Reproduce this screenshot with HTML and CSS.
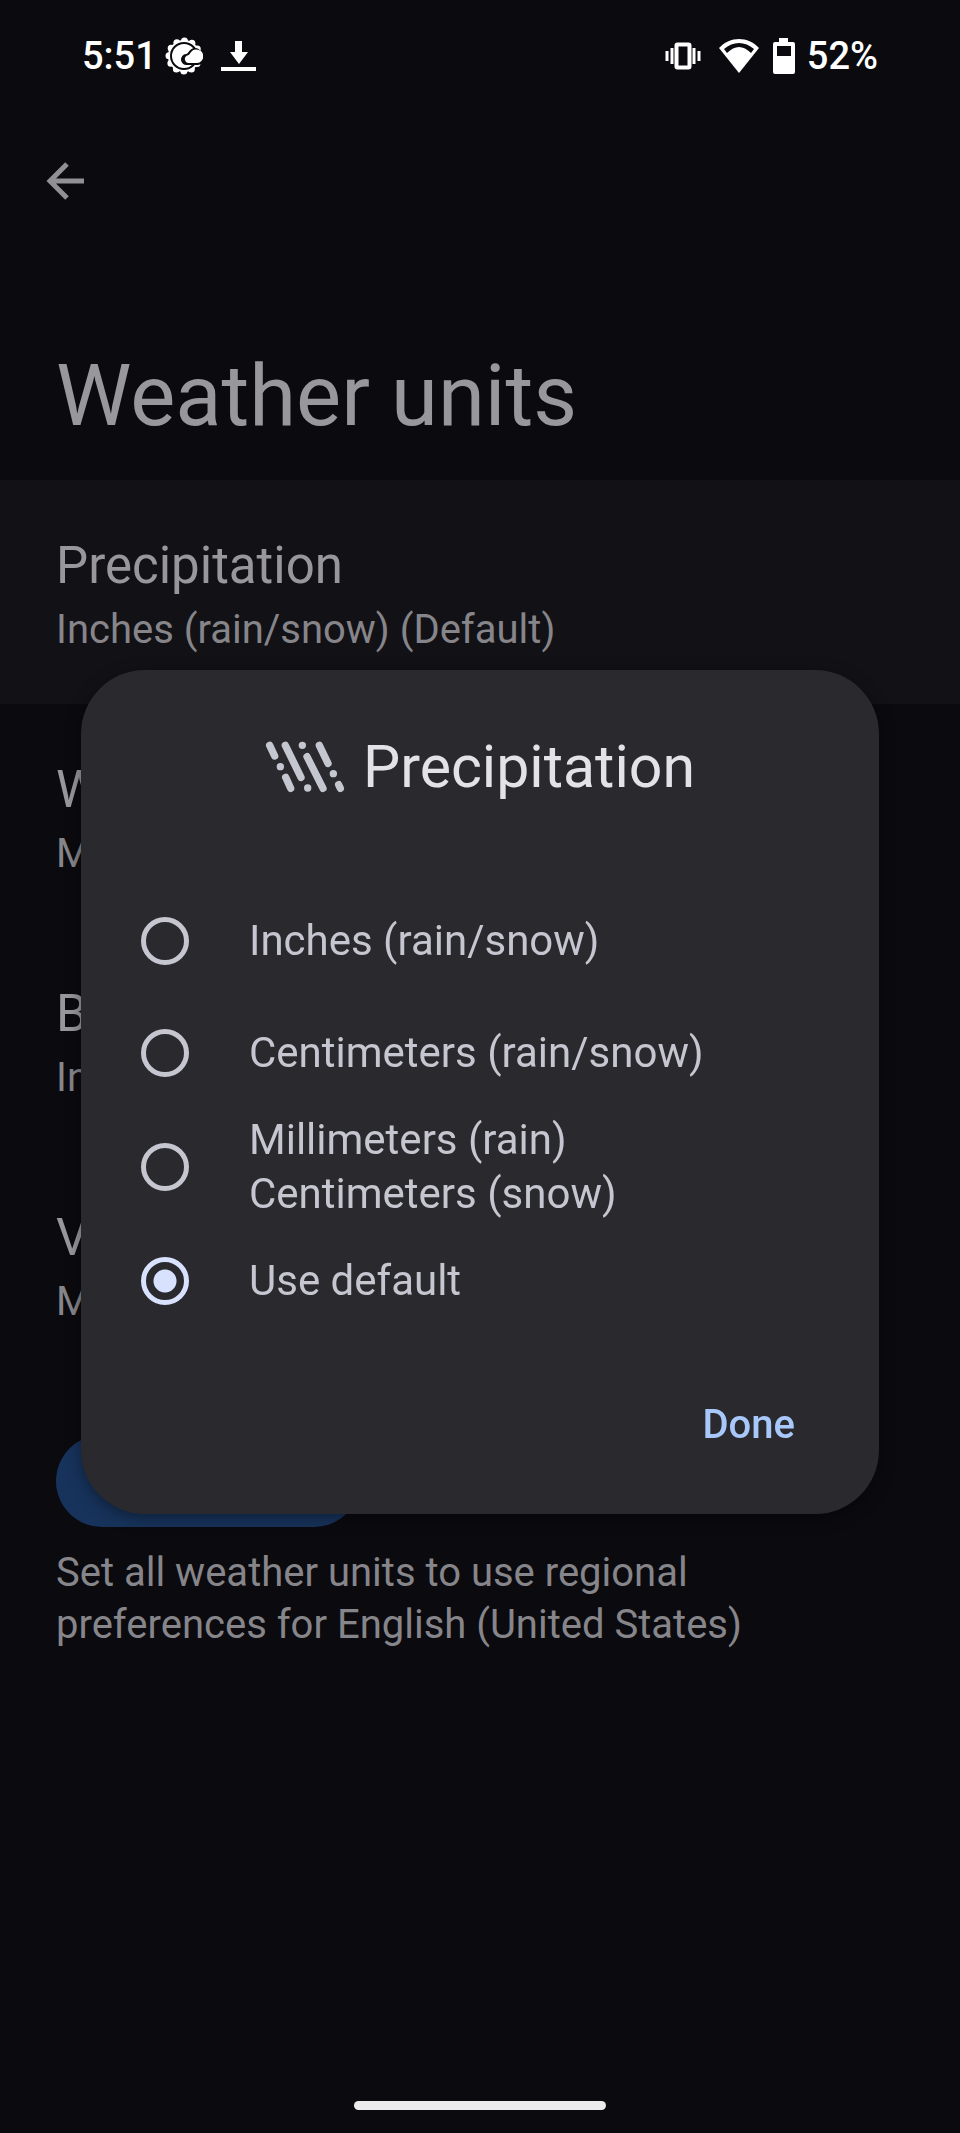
FILE: index.html
```html
<!DOCTYPE html>
<html lang="en">
<head>
  <meta charset="UTF-8">
  <meta name="viewport" content="width=device-width, initial-scale=1.0">
  <title>Weather units</title>
  <link rel="stylesheet" href="styles.css">
</head>
<body>
  <div class="status-bar">
    <span class="clock">5:51</span>
    <svg class="icon-weather" width="38" height="38" viewBox="0 0 38 38">
      <circle cx="19" cy="19" r="16" fill="#fff"/>
      <circle cx="19" cy="19" r="15" fill="none" stroke="#fff" stroke-width="7" stroke-linecap="round" stroke-dasharray="0 7.854"/>
      <circle cx="19" cy="19" r="13" fill="#fff" stroke="#0b0a0f" stroke-width="2"/>
      <path d="M25 28h-3a5.500 5.500 0 0 1-1-11c3 0 3-6 9-6a7 7 0 0 1 6 4l2 0v8a6 6 0 0 1-5 5z" fill="#0b0a0f"/>
      <path d="M32 26H23a4 4 0 0 1-1-7.500c4 0 3-6 9-6a6.500 6.500 0 0 1 1 13.500z" fill="#fff"/>
    </svg>
    <svg class="icon-download" width="36" height="30" viewBox="0 0 36 30" fill="#fff">
      <path d="M14 0h7v11h6l-9 12-9-12h5zM0 26h35v4H0z"/>
    </svg>
    <div class="status-right">
      <svg width="36" height="28" viewBox="0 0 36 28" fill="none" stroke="#fff" stroke-width="3">
        <rect x="11.500" y="2.500" width="13" height="23" rx="1" stroke-width="4"/>
        <path d="M2 9v10M7 6v16M29 6v16M34 9v10"/>
      </svg>
      <svg class="icon-wifi" width="40" height="34" viewBox="0 0 40 34">
        <path d="M0 9C11-3 29-3 40 9L20 34z" fill="#fff"/>
        <path d="M5 10C14 2 26 2 35 10l-3 4C24 6 16 6 8 14z" fill="#0b0a0f"/>
      </svg>
      <svg class="icon-battery" width="22" height="36" viewBox="0 0 22 36">
        <path d="M6 0h9v4h5q2 0 2 2v28q0 2-2 2H2q-2 0-2-2V6q0-2 2-2h4z" fill="#fff"/>
        <path d="M4 8h14v10H4z" fill="#0b0a0f"/>
      </svg>
      <span class="battery-level">52%</span>
    </div>
  </div>

  <main class="page">
    <button class="back" aria-label="Back">
      <svg width="38" height="38" viewBox="0 0 38 38" fill="none" stroke="#919095" stroke-width="5">
        <path d="M38 19H4M21 2L4 19l17 17"/>
      </svg>
    </button>
    <h1>Weather units</h1>

    <ul class="settings">
      <li class="setting selected">
        <h2>Precipitation</h2>
        <p>Inches (rain/snow) (Default)</p>
      </li>
      <li class="setting">
        <h2>Wind</h2>
        <p>Mph</p>
      </li>
      <li class="setting">
        <h2>Baro</h2>
        <p>Inches</p>
      </li>
      <li class="setting">
        <h2>Visibility</h2>
        <p>Miles</p>
      </li>
    </ul>

    <div class="reset">
      <button class="reset-btn">Use defaults</button>
      <p>Set all weather units to use regional preferences for English (United States)</p>
    </div>
  </main>

  <div class="overlay">
    <form class="dialog" role="dialog" aria-labelledby="dialogTitle">
      <div class="dialog-header">
        <svg width="80" height="52" viewBox="72 96 240 156" fill="none" stroke="#c4c7d0" stroke-width="22" stroke-linecap="round">
          <path d="M86 109l15 32M118 173h.1M134 205l15 33M133 109l47 96M200 237h.1M184 109h.1M198 143l48 95M235 109l26 54M277 194h.1M293 227l5 11"/>
        </svg>
        <h2 id="dialogTitle">Precipitation</h2>
      </div>

      <label class="option">
        <input type="radio" name="unit" value="in">
        <span>Inches (rain/snow)</span>
      </label>
      <label class="option">
        <input type="radio" name="unit" value="cm">
        <span>Centimeters (rain/snow)</span>
      </label>
      <label class="option">
        <input type="radio" name="unit" value="mm">
        <span>Millimeters (rain)<br>Centimeters (snow)</span>
      </label>
      <label class="option">
        <input type="radio" name="unit" value="default" checked>
        <span>Use default</span>
      </label>

      <div class="dialog-actions">
        <button type="button" class="done">Done</button>
      </div>
    </form>
  </div>

  <div class="home-bar"></div>
</body>
</html>
```
FILE: styles.css
```css
* {
  box-sizing: border-box;
  margin: 0;
  padding: 0;
  font-family: Roboto, sans-serif;
}

body {
  display: flex;
  flex-direction: column;
  min-height: 100vh;
  background: #0b0a0f;
  color: #98979c;
}

button {
  border: none;
  background: none;
  cursor: pointer;
}

svg {
  display: block;
  flex-shrink: 0;
}

/* status bar */
.status-bar {
  display: flex;
  align-items: center;
  height: 112px;
  padding: 0 82px;
  color: #fff;
  font-size: 38px;
  font-weight: 500;
}

.icon-weather {
  margin-left: 8px;
}

.icon-download {
  margin-left: 18px;
}

.status-right {
  display: flex;
  align-items: center;
  margin-left: auto;
}

.icon-wifi {
  margin-left: 18px;
}

.icon-battery {
  margin: 0 12px 0 14px;
}

/* settings page */
.page {
  flex: 1;
}

.back {
  display: block;
  margin: 40px 36px 0;
  padding: 10px;
}

h1 {
  padding: 132px 56px 30px;
  font-size: 85px;
  font-weight: 400;
  line-height: 108px;
}

.settings {
  list-style: none;
}

.setting {
  padding: 54px 56px 48px;
}

.setting.selected {
  background: #121116;
}

.setting h2 {
  margin-bottom: 6px;
  font-size: 51px;
  font-weight: 400;
  line-height: 64px;
}

.setting p,
.reset p {
  font-size: 40px;
  line-height: 52px;
  color: #86858a;
}

.reset {
  padding: 59px 56px;
}

.reset p {
  max-width: 740px;
}

.reset-btn {
  height: 92px;
  margin-bottom: 20px;
  padding: 0 46px;
  border-radius: 46px;
  background: #17335c;
  color: #86858a;
  font-size: 38px;
}

/* dialog */
.overlay {
  position: fixed;
  inset: 0;
  display: flex;
  align-items: center;
  padding: 50px 81px 0;
}

.dialog {
  width: 100%;
  padding: 63px 48px 43px;
  border-radius: 64px;
  background: #2a292e;
  box-shadow: 0 4px 16px rgba(0, 0, 0, 0.4);
}

.dialog-header {
  display: flex;
  justify-content: center;
  align-items: center;
  gap: 18px;
  margin-bottom: 84px;
}

.dialog-header h2 {
  font-size: 59px;
  font-weight: 400;
  line-height: 68px;
  color: #e4e2e9;
}

.option {
  display: flex;
  align-items: center;
  gap: 60px;
  min-height: 112px;
  padding: 4px 12px;
  font-size: 42px;
  line-height: 54px;
  color: #c6c6d0;
  cursor: pointer;
}

.option input {
  appearance: none;
  flex-shrink: 0;
  width: 48px;
  height: 48px;
  border: 5px solid #c6c6d0;
  border-radius: 50%;
}

.option input:checked {
  border-color: #d8e2ff;
  background: radial-gradient(circle, #d8e2ff 11px, transparent 12px);
}

.dialog-actions {
  display: flex;
  justify-content: flex-end;
  margin-top: 42px;
}

.done {
  height: 92px;
  padding: 0 36px;
  color: #a8c7fa;
  font-size: 40px;
  font-weight: 500;
}

.home-bar {
  width: 252px;
  height: 9px;
  margin: 0 auto 23px;
  border-radius: 5px;
  background: #ececec;
}
```
